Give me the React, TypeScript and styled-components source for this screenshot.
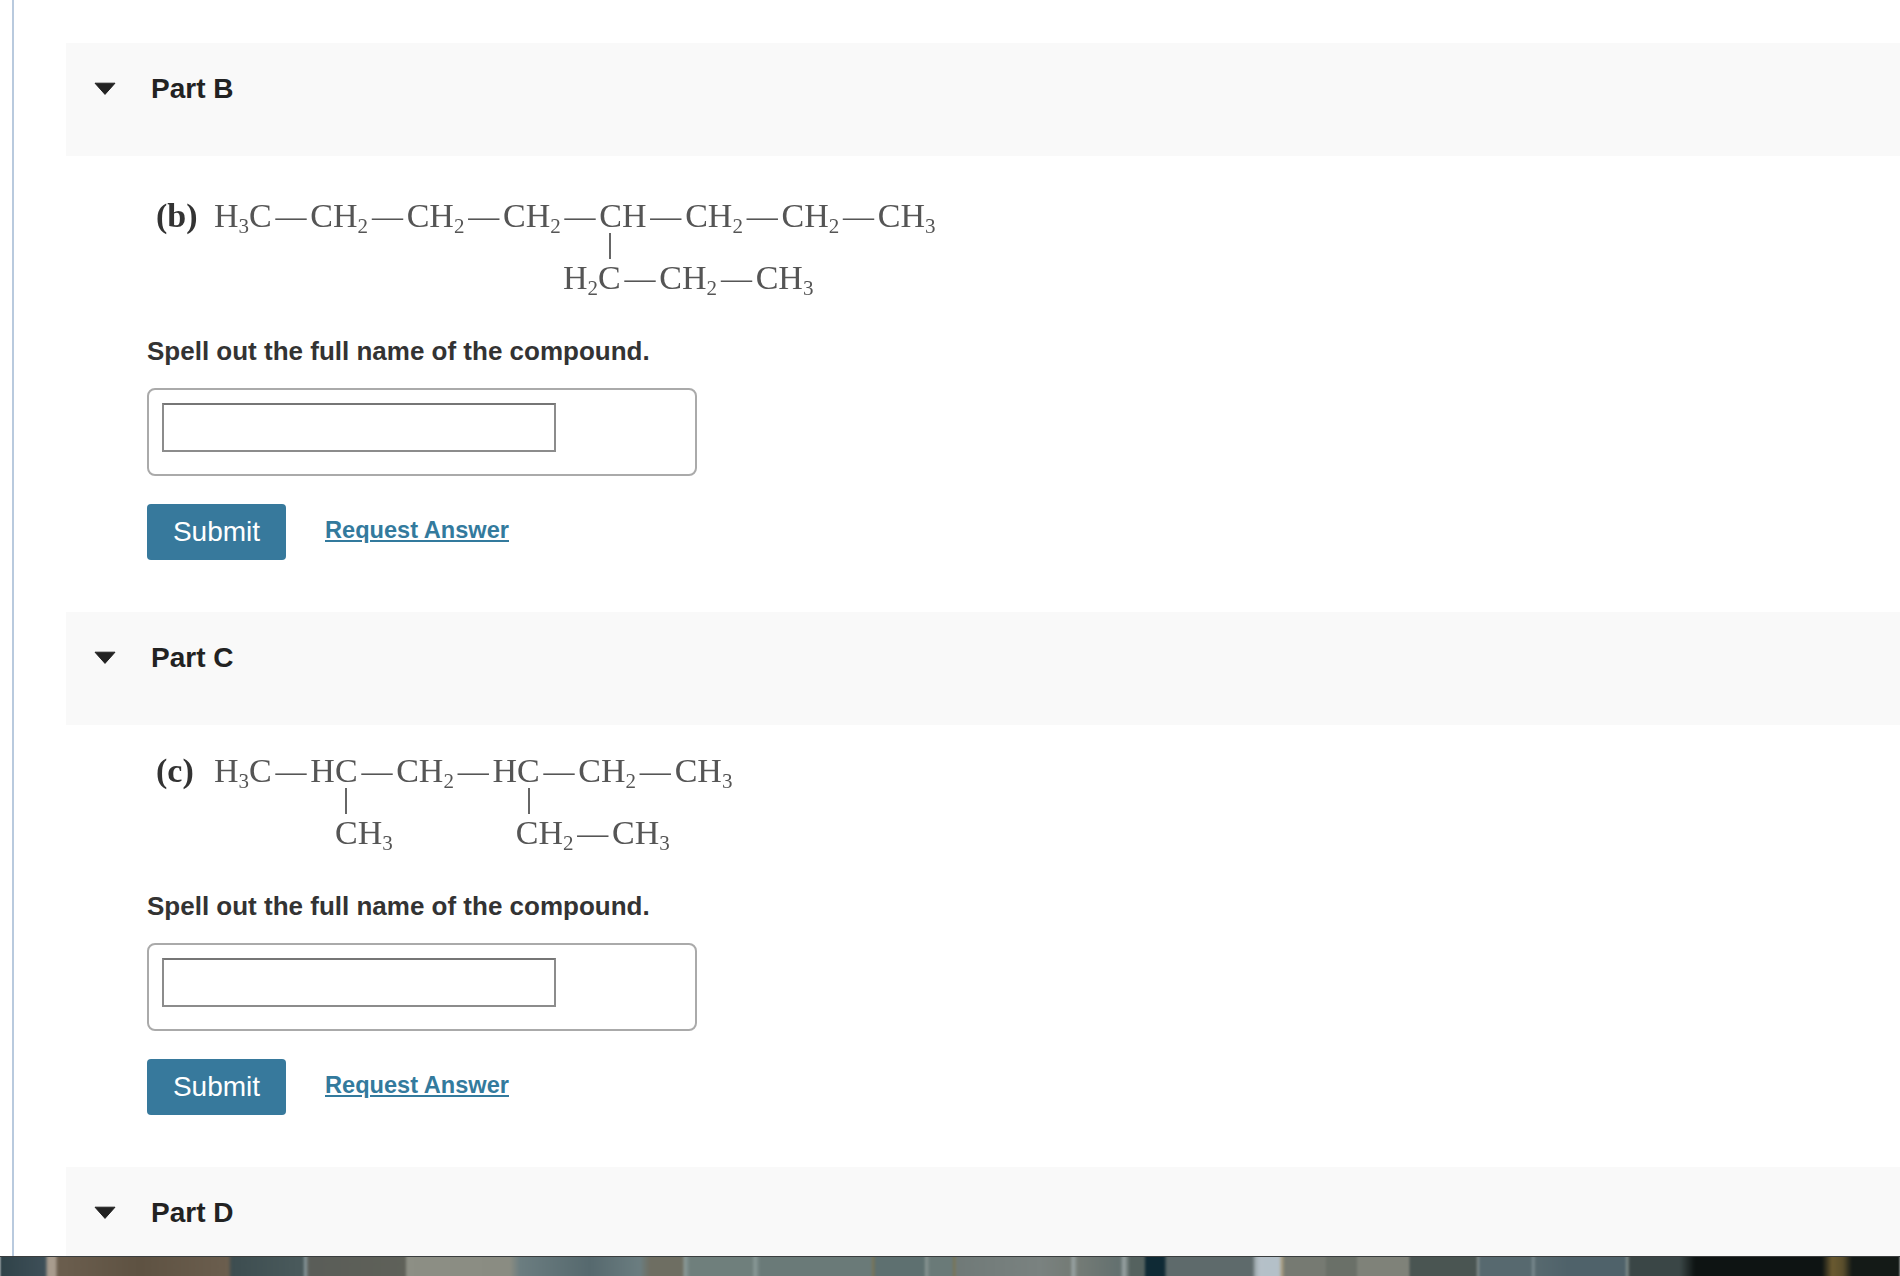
import styled, { createGlobalStyle } from "styled-components";

const GlobalStyle = createGlobalStyle`
  html, body {
    margin: 0;
    padding: 0;
    background: #fff;
    overflow: hidden;
  }
  body {
    font-family: "Liberation Sans", Arial, sans-serif;
  }
`;

type Piece = { text: string; sub?: string } | "bond";
type Group = { offset: number; pieces: Piece[] };

const chain = (...groups: string[]): Piece[] => {
  const out: Piece[] = [];
  groups.forEach((g, i) => {
    if (i > 0) out.push("bond");
    if (g === "H3C" || g === "H2C") {
      out.push({ text: "H", sub: g[1] }, { text: "C" });
    } else {
      const [text, sub] = g.split("_");
      out.push({ text, sub });
    }
  });
  return out;
};

const FormulaPieces = ({ pieces }: { pieces: Piece[] }) => (
  <>
    {pieces.map((p, i) =>
      p === "bond" ? (
        <Bond key={i}>—</Bond>
      ) : (
        <span key={i}>
          {p.text}
          {p.sub && <Sub>{p.sub}</Sub>}
        </span>
      ),
    )}
  </>
);

type PartProps = {
  name: string;
  label?: string;
  bodyTop?: number;
  main?: Piece[];
  branches?: Group[];
  links?: number[];
};

const Part = ({ name, label, bodyTop, main, branches, links }: PartProps) => (
  <section>
    <PartHeader>
      <Caret viewBox="0 0 22 13">
        <path d="M1 1.2h20L11 12.4z" fill="#222" stroke="#222" strokeLinejoin="round" />
      </Caret>
      <PartTitle>{name}</PartTitle>
    </PartHeader>
    {main && (
      <PartBody $top={bodyTop ?? 0}>
        <Formula>
          {links?.map((left) => <VerticalBond key={left} $left={left} />)}
          <FormulaLine>
            <FormulaLabel>{label}</FormulaLabel>
            <FormulaPieces pieces={main} />
          </FormulaLine>
          <FormulaLine>
            {branches?.map((b) => (
              <FormulaGroup key={b.offset} $offset={b.offset}>
                <FormulaPieces pieces={b.pieces} />
              </FormulaGroup>
            ))}
          </FormulaLine>
        </Formula>
        <Prompt>Spell out the full name of the compound.</Prompt>
        <AnswerBox>
          <AnswerInput type="text" />
        </AnswerBox>
        <Actions>
          <SubmitButton type="button">Submit</SubmitButton>
          <RequestLink href="#">Request Answer</RequestLink>
        </Actions>
      </PartBody>
    )}
  </section>
);

export default function App() {
  return (
    <>
      <GlobalStyle />
      <Page>
        <Content>
          <Part
            name="Part B"
            label="(b)"
            bodyTop={29}
            links={[462]}
            main={chain("H3C", "CH_2", "CH_2", "CH_2", "CH", "CH_2", "CH_2", "CH_3")}
            branches={[{ offset: 416, pieces: chain("H2C", "CH_2", "CH_3") }]}
          />
          <Part
            name="Part C"
            label="(c)"
            bodyTop={15}
            links={[198, 381]}
            main={chain("H3C", "HC", "CH_2", "HC", "CH_2", "CH_3")}
            branches={[
              { offset: 188, pieces: chain("CH_3") },
              { offset: 123, pieces: chain("CH_2", "CH_3") },
            ]}
          />
          <Part name="Part D" />
        </Content>
        <PhotoStrip />
      </Page>
    </>
  );
}

const Page = styled.div`
  width: 1900px;
  height: 1276px;
  display: flex;
  flex-direction: column;
`;

const Content = styled.main`
  flex: 1;
  min-height: 0;
  overflow: hidden;
  margin-left: 12px;
  padding: 43px 0 0 52px;
  border-left: 2px solid #b9cade;
`;

const PartHeader = styled.header`
  height: 113px;
  padding: 30px 0 0 28px;
  box-sizing: border-box;
  display: flex;
  align-items: flex-start;
  gap: 35px;
  background: #f9f9f9;
`;

const Caret = styled.svg`
  width: 22px;
  height: 13px;
  margin-top: 9px;
`;

const PartTitle = styled.h2`
  margin: 0;
  font-size: 28px;
  line-height: 32px;
  font-weight: 700;
  color: #222;
`;

const PartBody = styled.div<{ $top: number }>`
  padding: ${(p) => p.$top}px 0 52px 81px;
`;

const Formula = styled.div`
  position: relative;
  height: 136px;
  font-family: "Liberation Serif", "Times New Roman", serif;
  font-size: 34px;
  line-height: 62px;
  color: #555;
  filter: blur(0.5px);
`;

const FormulaLine = styled.div`
  height: 62px;
  white-space: nowrap;
`;

const FormulaGroup = styled.span<{ $offset: number }>`
  margin-left: ${(p) => p.$offset}px;
`;

const FormulaLabel = styled.span`
  display: inline-block;
  width: 67px;
  padding-left: 9px;
  box-sizing: border-box;
  font-weight: 700;
  color: #333;
`;

const Sub = styled.sub`
  font-size: 21px;
  line-height: 0;
  vertical-align: -6px;
`;

const Bond = styled.span`
  margin: 0 3.8px;
  font-size: 31px;
`;

const VerticalBond = styled.i<{ $left: number }>`
  position: absolute;
  left: ${(p) => p.$left}px;
  top: 48px;
  width: 2px;
  height: 26px;
  background: #666;
`;

const Prompt = styled.p`
  margin: 14px 0 0;
  font-size: 26px;
  line-height: 32px;
  font-weight: 700;
  color: #333;
`;

const AnswerBox = styled.div`
  width: 550px;
  height: 88px;
  margin-top: 21px;
  padding: 13px;
  box-sizing: border-box;
  border: 2px solid #aaa;
  border-radius: 8px;
`;

const AnswerInput = styled.input`
  display: block;
  width: 394px;
  height: 49px;
  padding: 0;
  box-sizing: border-box;
  border: 2px solid #8c8c8c;
  border-top-color: #767676;
  background: #fff;
  outline: none;
`;

const Actions = styled.div`
  margin-top: 28px;
  display: flex;
  align-items: center;
  gap: 39px;
`;

const SubmitButton = styled.button`
  width: 139px;
  height: 56px;
  padding: 0;
  border: none;
  border-radius: 4px;
  background: #37799c;
  color: #fff;
  font-family: inherit;
  font-size: 28px;
`;

const RequestLink = styled.a`
  margin-top: -3px;
  font-size: 23.6px;
  font-weight: 700;
  color: #337a9d;
`;

const PhotoStrip = styled.div`
  flex: none;
  position: relative;
  height: 20px;
  overflow: hidden;
  box-sizing: border-box;
  border-top: 1px solid #3a3d3e;

  &::before {
    content: "";
    position: absolute;
    inset: -4px 0;
    filter: blur(1.2px);
    background: linear-gradient(
      90deg,
      #2f4248 0,
      #3e4f58 45px,
      #a89c8e 48px,
      #a89c8e 55px,
      #6b5e4e 58px,
      #5e5242 140px,
      #6b5e4e 228px,
      #3d4d50 232px,
      #4a5a5c 303px,
      #8a9a9e 305px,
      #5a5d58 309px,
      #5f6159 405px,
      #8d8f85 407px,
      #8a8c82 510px,
      #6b7d80 520px,
      #56696e 590px,
      #6b7d80 640px,
      #6e6e62 650px,
      #6e6e62 682px,
      #8a9a98 685px,
      #6f7f7c 690px,
      #6f7f7c 752px,
      #8a9a98 755px,
      #6a7a78 760px,
      #6a7a78 871px,
      #7a7555 873px,
      #5e7070 876px,
      #5e7070 924px,
      #8a9694 926px,
      #6a7a78 930px,
      #6a7a78 952px,
      #7a7555 954px,
      #707a78 957px,
      #7a8280 1040px,
      #747b76 1070px,
      #9aa5a5 1073px,
      #747b76 1078px,
      #63706f 1120px,
      #9aa5a5 1124px,
      #55625f 1130px,
      #55625f 1144px,
      #0f2a35 1146px,
      #0f2a35 1164px,
      #5e6a6b 1167px,
      #5e6a6b 1252px,
      #a5b0b5 1256px,
      #b5c0c8 1260px,
      #b4c0c8 1279px,
      #a89c7e 1282px,
      #767a72 1285px,
      #767a72 1325px,
      #6a7068 1327px,
      #6a7068 1356px,
      #7f8279 1358px,
      #7f8279 1409px,
      #4a5552 1410px,
      #4a5552 1476px,
      #8a9492 1478px,
      #57696f 1480px,
      #57696f 1531px,
      #7e8e92 1533px,
      #57696f 1536px,
      #4f626a 1568px,
      #4f626a 1625px,
      #86938f 1627px,
      #3a4646 1630px,
      #3a4646 1680px,
      #0e1413 1695px,
      #0e1413 1822px,
      #6a5a30 1832px,
      #5a4e2c 1843px,
      #141a17 1852px,
      #141a17 1900px
    );
  }
`;
